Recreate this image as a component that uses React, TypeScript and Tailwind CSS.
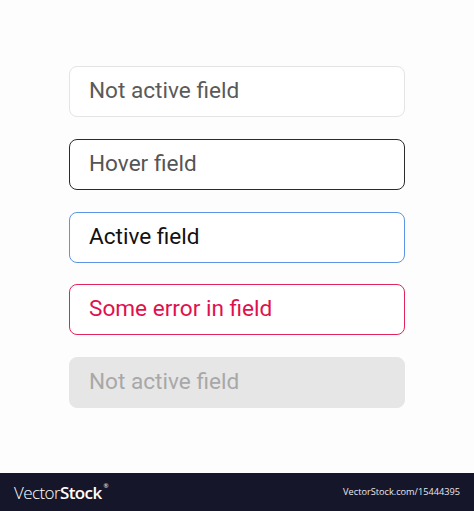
const fields = [
  { label: "Not active field", box: "bg-white border border-[#e4e4e4]", text: "text-[#5a5a5a]" },
  { label: "Hover field", box: "bg-white border border-[#2b2b2b]", text: "text-[#555555]" },
  { label: "Active field", box: "bg-white border border-[#5b95e3]", text: "text-[#111111]" },
  { label: "Some error in field", box: "bg-white border border-[#e3245a]", text: "text-[#e0114d]" },
  { label: "Not active field", box: "bg-[#e6e6e6] border border-[#e6e6e6]", text: "text-[#a8a8a8]" },
];

export default function App() {
  return (
    <div className="h-[511px] w-[474px] flex flex-col bg-[#fdfdfd] font-['Roboto',sans-serif]">
      <div className="flex-1 pt-[66px] pl-[69px] flex flex-col gap-[21.75px]">
        {fields.map((f, i) => (
          <div
            key={i}
            className={`w-[336px] h-[51px] rounded-[8px] flex items-center pl-[19px] ${f.box}`}
          >
            <span className={`text-[22.6px] leading-none ${f.text}`}>{f.label}</span>
          </div>
        ))}
      </div>

      {/* watermark bar */}
      <div className="h-[38px] bg-[#16162a] flex items-center justify-between pl-[14px] pr-[14px]">
        <div className="flex items-start text-white text-[17px] leading-none font-['Open_Sans',sans-serif] tracking-[-0.6px]">
          <span className="font-light">Vector</span>
          <span className="font-semibold">Stock</span>
          <span className="text-[6px] ml-[2px] -mt-[1px]">®</span>
        </div>
        <span className="text-[#e8e8ee] text-[9.2px] font-['Open_Sans',sans-serif]">
          VectorStock.com/15444395
        </span>
      </div>
    </div>
  );
}
